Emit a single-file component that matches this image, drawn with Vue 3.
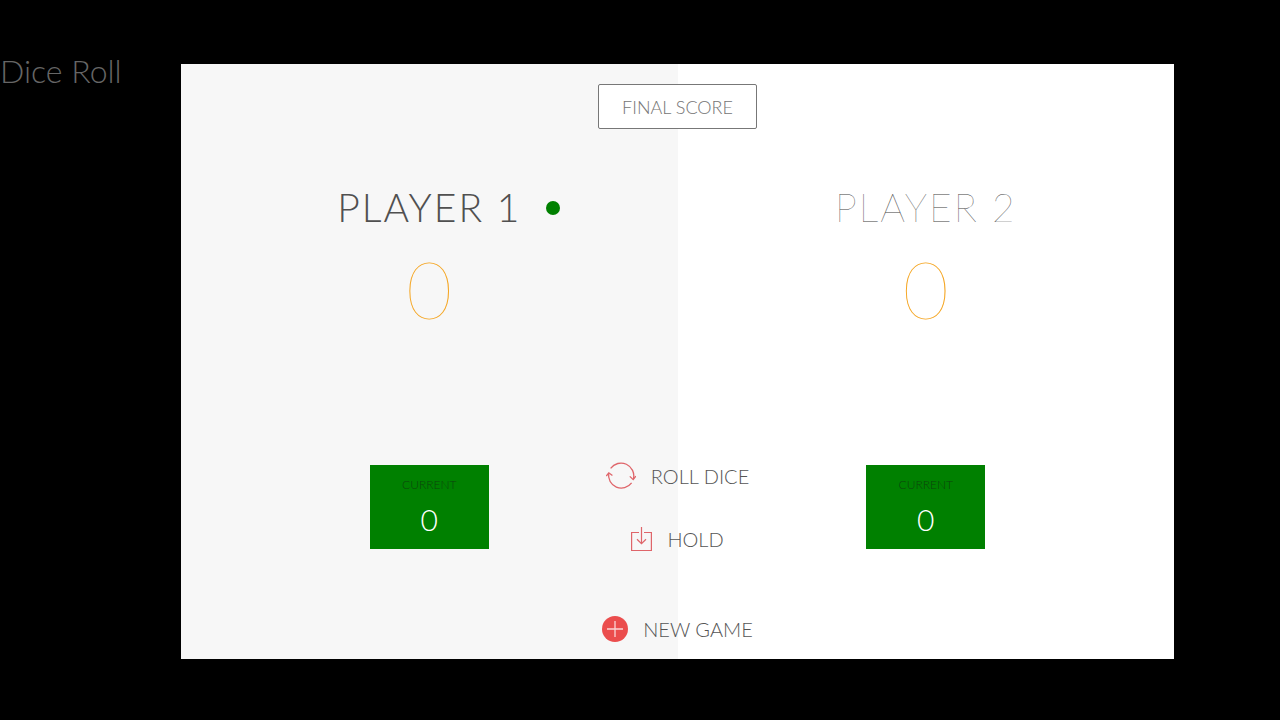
<script setup>
import { ref } from 'vue'

const finalScore = ref('')
const active = ref(0)
const players = ref([
  { name: 'Player 1', score: 0, current: 0 },
  { name: 'Player 2', score: 0, current: 0 }
])

function rollDice() {
  const value = Math.floor(Math.random() * 6) + 1
  if (value === 1) {
    players.value[active.value].current = 0
    active.value = 1 - active.value
  } else {
    players.value[active.value].current += value
  }
}

function hold() {
  const player = players.value[active.value]
  player.score += player.current
  player.current = 0
  active.value = 1 - active.value
}

function newGame() {
  active.value = 0
  players.value.forEach((player) => {
    player.score = 0
    player.current = 0
  })
}
</script>

<template>
  <div class="page">
    <h1 class="title">Dice Roll</h1>
    <main class="board">
      <section
        v-for="(player, i) in players"
        :key="player.name"
        class="panel"
        :class="{ active: active === i }"
      >
        <h2 class="name">{{ player.name }}</h2>
        <div class="score">{{ player.score }}</div>
        <div class="current">
          <div class="current-label">Current</div>
          <div class="current-score">{{ player.current }}</div>
        </div>
      </section>

      <div class="controls">
        <input
          v-model="finalScore"
          class="final-score"
          type="text"
          placeholder="FINAL SCORE"
          aria-label="Final score"
        />
        <button class="action roll" type="button" @click="rollDice">
          <svg width="30" height="28" viewBox="0 0 30 28" fill="none" stroke="currentColor" stroke-width="1.3">
            <path d="M4.6 6.4A12.8 12.8 0 0 1 27.4 17" />
            <path d="M25.6 20.9A12.8 12.8 0 0 1 2.7 11.2" />
            <path d="M23.8 14.4l3.4 3.2 2.6-3.4M0.3 14l2.5-3.2 3.6 2.8" />
          </svg>
          <span>Roll dice</span>
        </button>
        <button class="action hold" type="button" @click="hold">
          <svg width="21" height="25" viewBox="0 0 21 25" fill="none" stroke="currentColor" stroke-width="1.2">
            <path d="M8 5.5H.6V23.5H20.4V5.5H13" />
            <path d="M10.5 0V16.5M6 12.3l4.5 4.3 4.5-4.3" />
          </svg>
          <span>Hold</span>
        </button>
        <button class="action new" type="button" @click="newGame">
          <svg width="26" height="26" viewBox="0 0 26 26">
            <circle cx="13" cy="13" r="13" fill="currentColor" />
            <path d="M13 5V21M5 13H21" stroke="#fbd5d5" stroke-width="1.3" />
          </svg>
          <span>New game</span>
        </button>
      </div>
    </main>
  </div>
</template>

<style>
body {
  background: #000;
}
</style>

<style scoped>
.page {
  display: grid;
  grid-template-columns: 181px 1fr;
  box-sizing: border-box;
  min-height: 100vh;
  padding: 64px 106px 61px 0;
  background: #000;
  color: #555;
  font-family: Lato, "Liberation Sans", sans-serif;
  font-weight: 300;
}

.title {
  margin: -13px 0 0;
  color: #666;
  font-size: 32px;
  font-weight: 300;
  line-height: 40px;
}

.board {
  display: grid;
  grid-template-columns: 1fr 1fr;
  background: #fff;
}

.panel {
  grid-row: 1;
  grid-column: 1;
  display: flex;
  flex-direction: column;
  align-items: center;
  padding: 119px 0 110px;
}

.panel + .panel {
  grid-column: 2;
}

.panel.active {
  background: #f7f7f7;
}

.name {
  position: relative;
  margin: 0;
  color: #444;
  font-size: 39px;
  font-weight: 100;
  line-height: 48px;
  letter-spacing: 2px;
  text-transform: uppercase;
}

.active .name {
  color: #505050;
  font-weight: 300;
}

.active .name::after {
  content: "";
  position: absolute;
  top: 18px;
  left: calc(100% + 25px);
  width: 14px;
  height: 14px;
  border-radius: 50%;
  background: green;
}

.score {
  margin-top: 9px;
  color: #f5a623;
  font-size: 80px;
  font-weight: 100;
  line-height: 96px;
}

.current {
  box-sizing: border-box;
  width: 24%;
  margin-top: auto;
  padding: 12px 0;
  background: green;
  text-align: center;
}

.current-label {
  color: #0c440c;
  font-size: 12px;
  line-height: 16px;
  text-transform: uppercase;
}

.current-score {
  margin-top: 8px;
  color: #fff;
  font-size: 30px;
  line-height: 36px;
}

.controls {
  grid-row: 1;
  grid-column: 1 / -1;
  justify-self: center;
  display: flex;
  flex-direction: column;
  align-items: center;
  padding: 20px 0 15px;
}

.final-score {
  box-sizing: border-box;
  width: 159px;
  height: 45px;
  margin: 0 0 auto;
  padding: 0;
  border: 1px solid #777;
  border-radius: 2px;
  background: #fff;
  color: #555;
  font: inherit;
  font-size: 18px;
  text-align: center;
}

.final-score::placeholder {
  color: #757575;
  opacity: 1;
}

.action {
  display: flex;
  align-items: center;
  gap: 15px;
  margin: 0;
  padding: 0;
  border: 0;
  background: none;
  color: #555;
  font: inherit;
  font-size: 20px;
  line-height: 30px;
  text-transform: uppercase;
  cursor: pointer;
}

.action svg {
  color: #df656a;
}

.action.new svg {
  color: #eb4d4d;
}

.hold {
  margin-top: 33px;
}

.new {
  margin-top: 60px;
}
</style>
